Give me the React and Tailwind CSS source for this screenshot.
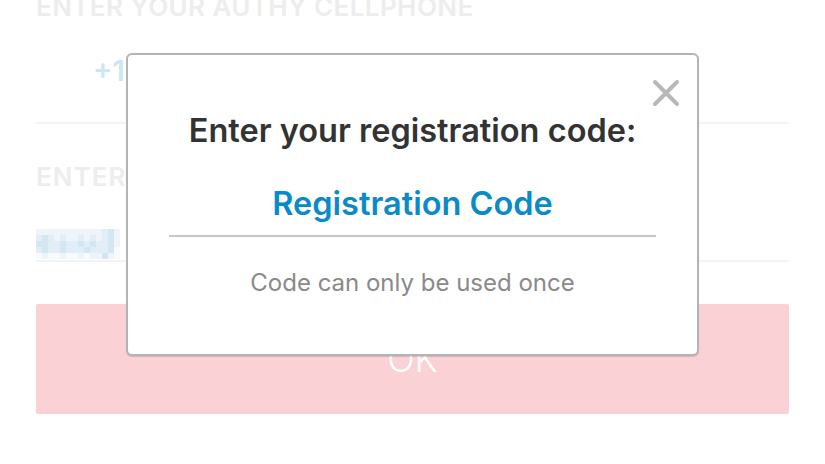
import React from "react";

const FONT = "font-['Inter','Noto_Sans',sans-serif]";

// pixelated (blurred-out) email, 6px cells
const MOSAIC = [
  [1, 1, 1, 1, 1, 1, 1, 1, 1, 1, 1, 2, 3, 1],
  [2, 3, 2, 1, 2, 1, 1, 2, 1, 2, 1, 2, 3, 1],
  [3, 3, 2, 2, 3, 2, 2, 3, 2, 3, 2, 2, 3, 1],
  [2, 3, 2, 2, 3, 2, 2, 2, 3, 2, 2, 2, 3, 0],
  [0, 1, 0, 0, 1, 0, 0, 1, 0, 1, 1, 3, 1, 0],
];
const SHADES = ["#f8fbfd", "#edf5fa", "#e1eef7", "#d3e7f3"];

function Mosaic() {
  return (
    <svg width="84" height="30" viewBox="0 0 84 30">
      {MOSAIC.map((row, r) =>
        row.map((v, c) => (
          <rect key={`${r}-${c}`} x={c * 6} y={r * 6} width="6" height="6" fill={SHADES[v]} />
        ))
      )}
    </svg>
  );
}

function CloseIcon() {
  return (
    <svg width="28" height="28" viewBox="0 0 28 28">
      <path d="M3 3 L25 25 M25 3 L3 25" stroke="#b8b8b8" strokeWidth="4" strokeLinecap="round" />
    </svg>
  );
}

export default function App() {
  return (
    <div className={`relative h-[464px] w-[825px] overflow-hidden bg-white ${FONT}`}>
      {/* page behind the dialog */}
      <div className="flex flex-col px-[36px]">
        <div className="-mt-[6px] text-[26px] leading-[26px] font-semibold tracking-[0.4px] text-[#ededed]">
          ENTER YOUR AUTHY CELLPHONE
        </div>
        <div className="flex h-[104px] items-center border-b-2 border-[#f3f3f3] pl-[57px]">
          <span className="text-[29px] font-semibold text-[#cde6f5]">+1</span>
        </div>
        <div className="mt-[40px] text-[26px] leading-[26px] font-semibold tracking-[1px] text-[#ededed]">
          ENTER
        </div>
        <div className="flex h-[72px] items-end border-b-2 border-[#f3f3f3] pb-[1px]">
          <Mosaic />
        </div>
        <button className="mt-[42px] flex h-[110px] items-center justify-center rounded-[2px] bg-[#fad1d4] text-[36px] font-light text-white">
          OK
        </button>
      </div>

      {/* registration dialog */}
      <div className="absolute left-[126px] top-[53px] flex h-[303px] w-[573px] flex-col items-center rounded-[6px] border-2 border-[#b4b4b4] bg-white shadow-[0_1px_1px_rgba(0,0,0,0.15)]">
        <button className="absolute right-[17px] top-[24px]">
          <CloseIcon />
        </button>
        <div className="mt-[57px] text-[32.5px] leading-[38px] font-semibold text-[#333333]">
          Enter your registration code:
        </div>
        <div className="mt-[35px] w-[487px] border-b-2 border-[#c8c8c8] pb-[12px] text-center text-[32.5px] leading-[38px] font-semibold text-[#0a8bc7]">
          Registration Code
        </div>
        <div className="mt-[31px] text-[24px] leading-[30px] text-[#8a8a8a]">
          Code can only be used once
        </div>
      </div>
    </div>
  );
}
